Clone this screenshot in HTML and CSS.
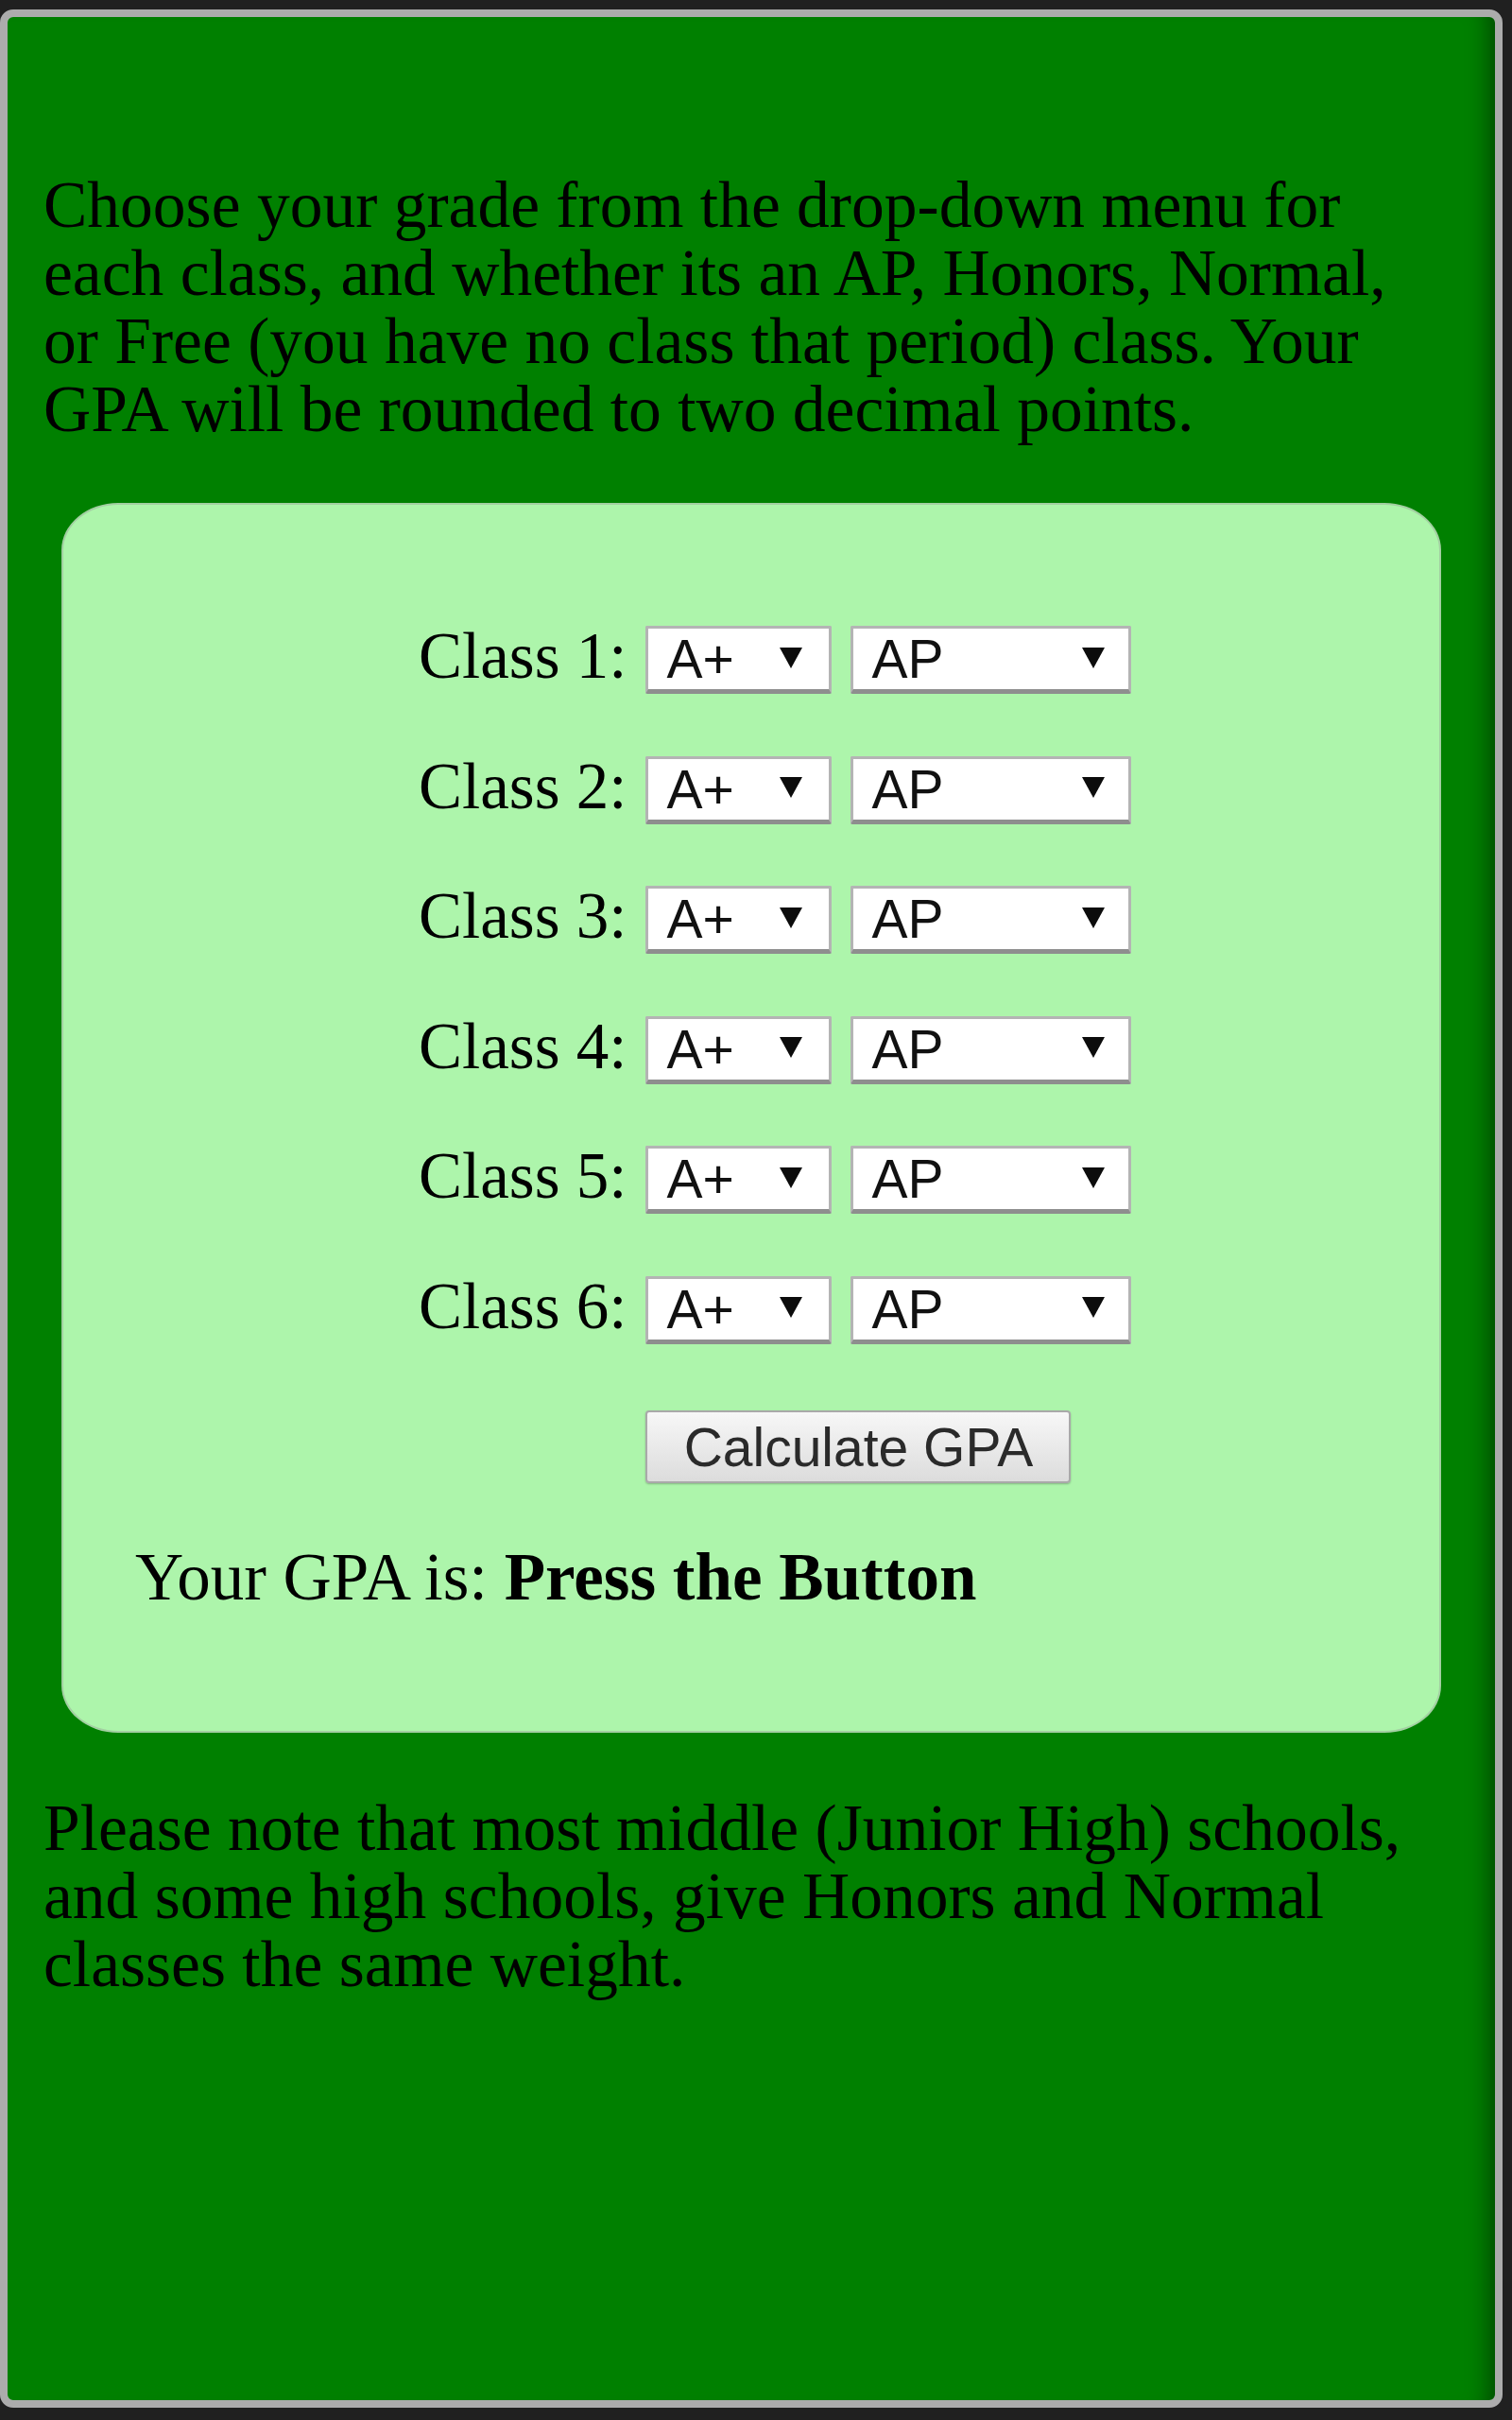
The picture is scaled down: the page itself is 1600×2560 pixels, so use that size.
FILE: index.html
```html
<!DOCTYPE html>
<html lang="en">
<head>
<meta charset="utf-8">
<title>GPA Calculator</title>
<link rel="stylesheet" href="styles.css">
</head>
<body>
<div class="frame">
  <p class="intro">Choose your grade from the drop-down menu for each class, and whether its an AP, Honors, Normal, or Free (you have no class that period) class. Your GPA will be rounded to two decimal points.</p>
  <div class="panel">
    <div class="grid">
      <span class="label">Class 1:</span>
      <div class="sel sel-grade"><span class="val">A+</span><span class="arrow"></span></div>
      <div class="sel sel-type"><span class="val">AP</span><span class="arrow"></span></div>
      <span class="label">Class 2:</span>
      <div class="sel sel-grade"><span class="val">A+</span><span class="arrow"></span></div>
      <div class="sel sel-type"><span class="val">AP</span><span class="arrow"></span></div>
      <span class="label">Class 3:</span>
      <div class="sel sel-grade"><span class="val">A+</span><span class="arrow"></span></div>
      <div class="sel sel-type"><span class="val">AP</span><span class="arrow"></span></div>
      <span class="label">Class 4:</span>
      <div class="sel sel-grade"><span class="val">A+</span><span class="arrow"></span></div>
      <div class="sel sel-type"><span class="val">AP</span><span class="arrow"></span></div>
      <span class="label">Class 5:</span>
      <div class="sel sel-grade"><span class="val">A+</span><span class="arrow"></span></div>
      <div class="sel sel-type"><span class="val">AP</span><span class="arrow"></span></div>
      <span class="label">Class 6:</span>
      <div class="sel sel-grade"><span class="val">A+</span><span class="arrow"></span></div>
      <div class="sel sel-type"><span class="val">AP</span><span class="arrow"></span></div>
      <button class="calc" type="button">Calculate GPA</button>
    </div>
    <p class="result">Your GPA is: <b>Press the Button</b></p>
  </div>
  <p class="note">Please note that most middle (Junior High) schools, and some high schools, give Honors and Normal classes the same weight.</p>
</div>
</body>
</html>
```

FILE: styles.css
```css
html {
  background: #202020;
}
body {
  margin: 0;
  height: 2560px;
  overflow: hidden;
  font-family: "Liberation Serif", "Times New Roman", serif;
  color: #000;
}
.frame {
  box-sizing: border-box;
  margin: 10px 10px 0 0;
  height: 2537px;
  border: 8px solid #acacac;
  border-radius: 14px;
  background: #008000;
  box-shadow: inset -28px 0 24px -22px rgba(0, 0, 0, 0.45);
  overflow: hidden;
}
.intro,
.note {
  font-size: 69.5px;
  line-height: 72px;
  padding: 0 42px 0 38px;
}
.intro {
  margin: 163px 0 0 0;
}
.panel {
  margin: 63px 57px 0 57px;
  background: #adf5ab;
  border: 2px solid #a3cfa2;
  border-radius: 60px / 50px;
  padding: 124px 0 127px 76px;
}
.grid {
  display: grid;
  grid-template-columns: auto 197px 297px;
  column-gap: 20px;
  row-gap: 61.5px;
  align-items: baseline;
  justify-content: start;
  margin-left: 300px;
}
.label {
  font-size: 69px;
  line-height: 72px;
}
.sel {
  box-sizing: border-box;
  height: 72px;
  display: flex;
  align-items: center;
  background: #fff;
  border: 3px solid #b4b4b4;
  border-bottom: 5px solid #8e8e8e;
  border-radius: 2px;
  padding: 0 28px 0 19px;
  font-family: "Liberation Sans", Arial, sans-serif;
  font-size: 57px;
  color: #111;
}
.sel-type {
  padding-right: 25px;
}
.val {
  line-height: 64px;
}
.arrow {
  margin-left: auto;
  margin-top: -3px;
  width: 0;
  height: 0;
  border-left: 12.5px solid transparent;
  border-right: 12.5px solid transparent;
  border-top: 22px solid #0c0c0c;
}
.calc {
  grid-column: 2 / span 2;
  justify-self: start;
  margin-top: 9px;
  box-sizing: border-box;
  width: 450px;
  height: 77px;
  padding: 0;
  border: 2px solid #a9a9a9;
  border-radius: 4px;
  background: linear-gradient(#f7f7f7, #dcdcdc);
  box-shadow: 0 1px 2px rgba(0, 0, 0, 0.25);
  font-family: "Liberation Sans", Arial, sans-serif;
  font-size: 57px;
  color: #2a2a2a;
}
.result {
  margin: 63px 0 0 0;
  font-size: 71px;
  line-height: 72px;
}
.result b {
  font-weight: bold;
}
.note {
  margin: 65px 0 0 0;
}
```
